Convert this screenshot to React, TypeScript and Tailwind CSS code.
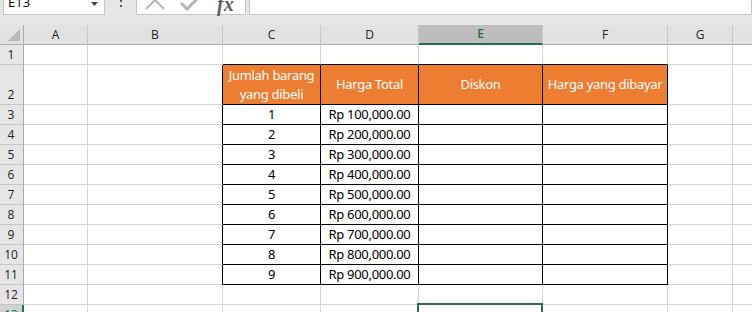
import React from "react";

const COLS = ["A", "B", "C", "D", "E", "F", "G", ""];
const SELECTED_COL = 4; // E
const SELECTED_ROW = 13;

const prices = [1, 2, 3, 4, 5, 6, 7, 8, 9].map((n) => ({
  qty: String(n),
  total: `Rp ${n}00,000.00`,
}));

const headers = ["Jumlah barang yang dibeli", "Harga Total", "Diskon", "Harga yang dibayar"];

const cellFont = { fontFamily: '"Noto Sans", "Open Sans", sans-serif' };
const uiFont = { fontFamily: '"Open Sans", "Noto Sans", sans-serif' };

function FormulaBar() {
  return (
    <div className="h-[25px] overflow-hidden bg-[#e6e6e6]">
      <div className="-mt-[8px] flex h-[23px] items-stretch">
        <div
          className="relative ml-[3px] w-[102px] border border-[#c6c6c6] bg-white pl-[4px] text-[13px] leading-[19px] text-black"
          style={uiFont}
        >
          E13
          <svg className="absolute right-[6px] top-[9px]" width="7" height="4" viewBox="0 0 7 4">
            <path d="M0 0 L7 0 L3.5 4 Z" fill="#444" />
          </svg>
        </div>
        <div className="ml-[14px] flex w-[4px] flex-col items-center gap-[3px] pt-[3px]">
          <span className="h-[2px] w-[2px] bg-[#555]" />
          <span className="h-[2px] w-[2px] bg-[#555]" />
          <span className="h-[2px] w-[2px] bg-[#555]" />
        </div>
        <div className="relative ml-[13px] w-[110px] border border-[#c6c6c6] bg-white">
          <svg className="absolute left-[7px] top-[-2px]" width="22" height="20" viewBox="0 0 22 20">
            <path d="M2 0 L20 18 M20 0 L2 18" stroke="#b4b4b4" strokeWidth="2" fill="none" />
          </svg>
          <svg className="absolute left-[43px] top-[2px]" width="20" height="16" viewBox="0 0 20 16">
            <path d="M1 8 L7 14 L19 2" stroke="#b4b4b4" strokeWidth="3" fill="none" />
          </svg>
          <span
            className="absolute left-[80px] top-[-4px] text-[20px] font-bold italic text-[#5e5e5e]"
            style={{ fontFamily: '"Liberation Serif", "DejaVu Serif", serif' }}
          >
            fx
          </span>
        </div>
        <div className="ml-[3px] flex-1 border border-[#c6c6c6] bg-white" />
      </div>
    </div>
  );
}

function ColumnHeaders() {
  return (
    <>
      <div className="relative border-b border-r border-[#ababab] bg-[#e2e2e2]">
        <svg className="absolute bottom-[3px] right-[3px]" width="12" height="12" viewBox="0 0 12 12">
          <path d="M12 0 L12 12 L0 12 Z" fill="#b8b8b8" />
        </svg>
      </div>
      {COLS.map((c, i) => (
        <div
          key={i}
          className={
            i === SELECTED_COL
              ? "flex items-center justify-center border-b-2 border-r border-b-[#217346] border-r-[#c8c8c8] bg-[#bdbdbd] text-[12px] font-semibold text-[#217346]"
              : "flex items-center justify-center border-b border-r border-b-[#ababab] border-r-[#c8c8c8] bg-[#e2e2e2] text-[12px] text-[#222]"
          }
          style={uiFont}
        >
          {c}
        </div>
      ))}
    </>
  );
}

function RowHeader({ n }: { n: number }) {
  const selected = n === SELECTED_ROW;
  return (
    <div
      className={
        selected
          ? "flex items-end justify-center border-b border-r-2 border-b-[#c6c6c6] border-r-[#217346] bg-[#d2d2d2] text-[12px] leading-[19px] text-[#217346]"
          : "flex items-end justify-center border-b border-r border-b-[#c6c6c6] border-r-[#ababab] bg-[#e6e6e6] pr-[1px] text-[12px] leading-[19px] text-[#222]"
      }
      style={uiFont}
    >
      {n}
    </div>
  );
}

function Cell({
  row,
  col,
  children,
  head,
}: {
  row: number;
  col: number;
  children?: React.ReactNode;
  head?: boolean;
}) {
  const inTable = row >= 2 && row <= 11 && col >= 2 && col <= 5;
  const rightBlack = inTable || (col === 1 && row >= 2 && row <= 11);
  const bottomBlack = inTable || (row === 1 && col >= 2 && col <= 5);
  const selected = row === SELECTED_ROW && col === SELECTED_COL;
  return (
    <div
      className={[
        "relative flex justify-center border-b border-r text-center text-[13px] leading-[19px] tracking-[-0.3px] text-black",
        head ? "items-center bg-[#ed7d31] text-white" : "items-end",
        rightBlack ? "border-r-black" : "border-r-[#d4d4d4]",
        bottomBlack ? "border-b-black" : "border-b-[#d4d4d4]",
      ].join(" ")}
      style={cellFont}
    >
      {children}
      {selected && (
        <div className="absolute -bottom-[1px] -left-[2px] -right-[1px] -top-[2px] border-2 border-[#217346]" />
      )}
    </div>
  );
}

export default function App() {
  const rows = Array.from({ length: 13 }, (_, i) => i + 1);
  return (
    <div className="h-[312px] w-[752px] overflow-hidden bg-white">
      <FormulaBar />
      <div className="grid grid-cols-[24px_64px_135px_98px_98px_124px_125px_65px_60px] grid-rows-[20px_20px_40px_repeat(11,20px)]">
        <ColumnHeaders />
        {rows.map((r) => (
          <React.Fragment key={r}>
            <RowHeader n={r} />
            {COLS.map((_, c) => {
              let content: React.ReactNode = null;
              let head = false;
              if (r === 2 && c >= 2 && c <= 5) {
                head = true;
                content = (
                  <span className={c === 5 ? "whitespace-nowrap" : "px-[2px]"}>{headers[c - 2]}</span>
                );
              } else if (r >= 3 && r <= 11) {
                const p = prices[r - 3];
                if (c === 2) content = p.qty;
                if (c === 3) content = p.total;
              }
              return (
                <Cell key={c} row={r} col={c} head={head}>
                  {content}
                </Cell>
              );
            })}
          </React.Fragment>
        ))}
      </div>
    </div>
  );
}
